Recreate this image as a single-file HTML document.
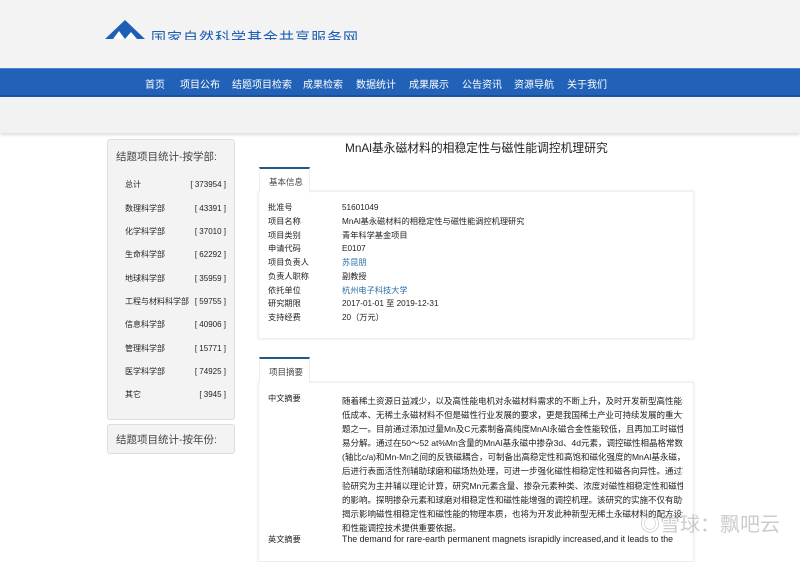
<!DOCTYPE html>
<html><head><meta charset="utf-8"><style>
*{margin:0;padding:0;box-sizing:border-box}
body{width:800px;height:546px;overflow:hidden;background:#fff;font-family:"Liberation Sans","Noto Sans CJK SC",sans-serif;color:#222;position:relative}
.hdr{position:absolute;left:0;top:0;width:800px;height:68px;background:#f3f3f3}
.nav{position:absolute;left:0;top:68px;width:800px;height:29px;background:#2162b8;border-top:1px solid #4a86d0;border-bottom:2px solid #164f9e}
.nav span{position:absolute;top:7px;color:#fff;font-size:10px}
.gray{position:absolute;left:0;top:97px;width:800px;height:36px;background:#f2f2f2;box-shadow:0 2px 3px #ddd}
.abs{position:absolute;white-space:nowrap}
.panel{position:absolute;left:107px;width:128px;background:#f3f3f3;border:1px solid #ddd;border-radius:3px}
.panel .t{position:absolute;left:8px;top:9px;font-size:10.5px;color:#444;white-space:nowrap}
.row{position:absolute;left:17px;width:101px;font-size:8px;line-height:10px;color:#222;display:flex;justify-content:space-between;white-space:nowrap}
.card{position:absolute;left:258px;width:436px;background:#fff;border:1px solid #eee;box-shadow:0 0 3px #e6e6e6}
.tab{position:absolute;left:259px;width:51px;height:26px;background:#fff;border-top:2px solid #1f5a8a;border-left:1px solid #eee;border-right:1px solid #eee;font-size:8.5px;line-height:10px;color:#444;padding:8px 0 0 9px}
.f{position:absolute;font-size:8.2px;line-height:10px;color:#222;white-space:nowrap}
.lk{color:#2a6fa8}
.p{position:absolute;left:342px;top:394px;width:341px;font-size:8.5px;line-height:14.1px;color:#222}
.p div{white-space:nowrap;text-align:justify;text-align-last:justify;width:341px;overflow:hidden}
.p div.l{text-align-last:left}
</style></head><body>
<div class="hdr">
<svg class="abs" style="left:105px;top:19px" width="40" height="22" viewBox="0 0 40 22"><path d="M0 20 L20 1 L40 20 Z" fill="#1d5fb4"/><path d="M8 20 L14 12 L20 20 M20 20 L26 13 L32 20" fill="#fff"/></svg>
<div class="abs" style="left:151px;top:29px;height:11px;overflow:hidden"><div style="font-size:15px;color:#1d5fb4;line-height:20px;letter-spacing:1px">国家自然科学基金共享服务网</div></div>
</div>
<div class="nav">
<span style="left:145px">首页</span><span style="left:180px">项目公布</span><span style="left:232px">结题项目检索</span><span style="left:303px">成果检索</span><span style="left:356px">数据统计</span><span style="left:409px">成果展示</span><span style="left:462px">公告资讯</span><span style="left:514px">资源导航</span><span style="left:567px">关于我们</span>
</div>
<div class="gray"></div>

<div class="panel" style="top:139px;height:281px">
<div class="t">结题项目统计-按学部:</div>
<div class="row" style="top:40px"><span>总计</span><span>[ 373954 ]</span></div>
<div class="row" style="top:64px"><span>数理科学部</span><span>[ 43391 ]</span></div>
<div class="row" style="top:87px"><span>化学科学部</span><span>[ 37010 ]</span></div>
<div class="row" style="top:110px"><span>生命科学部</span><span>[ 62292 ]</span></div>
<div class="row" style="top:134px"><span>地球科学部</span><span>[ 35959 ]</span></div>
<div class="row" style="top:157px"><span>工程与材料科学部</span><span>[ 59755 ]</span></div>
<div class="row" style="top:180px"><span>信息科学部</span><span>[ 40906 ]</span></div>
<div class="row" style="top:204px"><span>管理科学部</span><span>[ 15771 ]</span></div>
<div class="row" style="top:227px"><span>医学科学部</span><span>[ 74925 ]</span></div>
<div class="row" style="top:250px"><span>其它</span><span>[ 3945 ]</span></div>
</div>
<div class="panel" style="top:424px;height:30px"><div class="t" style="top:7px">结题项目统计-按年份:</div></div>

<div class="abs" style="left:345px;top:139px;font-size:11.8px;color:#222">MnAl基永磁材料的相稳定性与磁性能调控机理研究</div>

<div class="card" style="top:191px;height:148px"></div>
<div class="tab" style="top:167px">基本信息</div>
<div class="f" style="left:268px;top:203px">批准号</div><div class="f" style="left:342px;top:203px">51601049</div>
<div class="f" style="left:268px;top:217px">项目名称</div><div class="f" style="left:342px;top:217px">MnAl基永磁材料的相稳定性与磁性能调控机理研究</div>
<div class="f" style="left:268px;top:231px">项目类别</div><div class="f" style="left:342px;top:231px">青年科学基金项目</div>
<div class="f" style="left:268px;top:244px">申请代码</div><div class="f" style="left:342px;top:244px">E0107</div>
<div class="f" style="left:268px;top:258px">项目负责人</div><div class="f lk" style="left:342px;top:258px">苏昆朋</div>
<div class="f" style="left:268px;top:272px">负责人职称</div><div class="f" style="left:342px;top:272px">副教授</div>
<div class="f" style="left:268px;top:286px">依托单位</div><div class="f lk" style="left:342px;top:286px">杭州电子科技大学</div>
<div class="f" style="left:268px;top:299px">研究期限</div><div class="f" style="left:342px;top:299px">2017-01-01 至 2019-12-31</div>
<div class="f" style="left:268px;top:313px">支持经费</div><div class="f" style="left:342px;top:313px">20（万元）</div>

<div class="card" style="top:382px;height:180px"></div>
<div class="tab" style="top:357px">项目摘要</div>
<div class="f" style="left:268px;top:394px">中文摘要</div>
<div class="p">
<div>随着稀土资源日益减少，以及高性能电机对永磁材料需求的不断上升，及时开发新型高性能、</div>
<div>低成本、无稀土永磁材料不但是磁性行业发展的要求，更是我国稀土产业可持续发展的重大课</div>
<div>题之一。目前通过添加过量Mn及C元素制备高纯度MnAl永磁合金性能较低，且再加工时磁性相</div>
<div>易分解。通过在50～52 at%Mn含量的MnAl基永磁中掺杂3d、4d元素，调控磁性相晶格常数</div>
<div>(轴比c/a)和Mn-Mn之间的反铁磁耦合，可制备出高稳定性和高饱和磁化强度的MnAl基永磁，</div>
<div>后进行表面活性剂辅助球磨和磁场热处理，可进一步强化磁性相稳定性和磁各向异性。通过实</div>
<div>验研究为主并辅以理论计算，研究Mn元素含量、掺杂元素种类、浓度对磁性相稳定性和磁性能</div>
<div>的影响。探明掺杂元素和球磨对相稳定性和磁性能增强的调控机理。该研究的实施不仅有助于</div>
<div>揭示影响磁性相稳定性和磁性能的物理本质，也将为开发此种新型无稀土永磁材料的配方设计</div>
<div class="l">和性能调控技术提供重要依据。</div>
</div>
<div class="f" style="left:268px;top:535px">英文摘要</div>
<div class="f" style="left:342px;top:534px;font-size:8.8px">The demand for rare-earth permanent magnets israpidly increased,and it leads to the</div>
<div class="abs" style="left:640px;top:508px;font-size:20px;color:rgba(170,170,170,0.6)">◎雪球：飘吧云</div>
</body></html>
